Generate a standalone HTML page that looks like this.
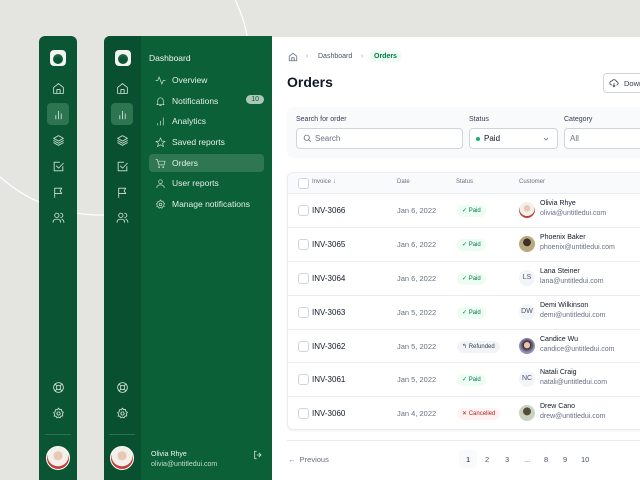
<!DOCTYPE html>
<html><head><meta charset="utf-8"><style>
*{box-sizing:border-box;margin:0;padding:0}
html,body{width:640px;height:480px;overflow:hidden}
body{background:#e4e5e0;font-family:"Liberation Sans",sans-serif;position:relative}
.abs{position:absolute}
.mini{left:39px;top:36px;width:38px;height:444px;background:#0a5533;border-radius:6px 6px 0 0}
.panel{left:104px;top:36px;width:168px;height:444px;background:#0b6038;border-radius:6px 0 0 0;overflow:hidden}
.rail{left:0;top:0;width:37px;height:100%;background:#095030}
.ic{position:absolute;width:22px;height:22px;display:flex;align-items:center;justify-content:center}
.ic svg{width:13px;height:13px;stroke:#cfe3d6;fill:none;stroke-width:1.6;stroke-linecap:round;stroke-linejoin:round}
.act{background:#2c7550;border-radius:4px}
.logo{width:16px;height:16px;background:#f2f4f2;border-radius:4px;position:absolute;overflow:hidden}
.logo:after{content:"";position:absolute;left:3px;top:4px;width:10px;height:10px;border-radius:50%;background:radial-gradient(circle at 50% 70%,#0a5533 40%,#3d7a5a)}
.nav{position:absolute;left:45px;font-size:8.5px;color:#e4efe8;display:flex;align-items:center;width:115px;height:18px;padding-left:6px}
.nav svg{width:11px;height:11px;stroke:#cfe3d6;fill:none;stroke-width:1.5;margin-right:6px;stroke-linecap:round;stroke-linejoin:round}
.av{border-radius:50%;background:radial-gradient(circle at 50% 40%,#e9c9b5 25%,#f3efe9 27%,#f3efe9 60%,#c43d3d 62%);border:1.5px solid #fff}
.main{left:272px;top:37px;width:368px;height:443px;background:#fff}
.t{position:absolute;white-space:nowrap}
.row{position:absolute;left:287px;width:360px;height:34px;border-top:1px solid #eaecf0}
.cb{position:absolute;left:11px;top:11px;width:11px;height:11px;border:1px solid #d0d5dd;border-radius:3px;background:#fff}
.row .inv{left:25px;top:12px;font-size:8px;color:#101828}
.row .dt{left:110px;top:12px;font-size:7.5px;color:#667085}
.badge{position:absolute;left:170px;top:11px;height:12px;border-radius:6px;font-size:6px;padding:0 5px;line-height:12px}
.paid{background:#ecfdf3;color:#067647}
.ref{background:#f2f4f7;color:#344054}
.can{background:#fef3f2;color:#b42318}
.cav{position:absolute;left:232px;top:8px;width:16px;height:16px;border-radius:50%;font-size:7px;color:#475467;text-align:center;line-height:16px;background:#f2f4f7}
.nm{left:253px;top:6px;font-size:7px;color:#101828}
.em{left:253px;top:16px;font-size:7px;color:#667085}
</style></head><body>
<svg class="abs" style="left:0;top:0" width="640" height="480"><circle cx="100" cy="65" r="150" fill="none" stroke="#fff" stroke-width="1.2"/></svg>

<div class="abs mini">
 <div class="logo" style="left:11px;top:14px"></div>
 <div class="ic" style="left:8px;top:41px"><svg viewBox="0 0 24 24"><path d="M3 10l9-7 9 7v11H3z"/><path d="M9 21v-7h6v7"/></svg></div>
 <div class="ic act" style="left:8px;top:67px"><svg viewBox="0 0 24 24"><path d="M7 20v-6M12 20V6M17 20v-9"/></svg></div>
 <div class="ic" style="left:8px;top:93px"><svg viewBox="0 0 24 24"><path d="M12 3l9 5-9 5-9-5z M3 12l9 5 9-5 M3 16l9 5 9-5"/></svg></div>
 <div class="ic" style="left:8px;top:119px"><svg viewBox="0 0 24 24"><path d="M20 12v8H4V4h10"/><path d="M8 11l4 4 9-9"/></svg></div>
 <div class="ic" style="left:8px;top:145px"><svg viewBox="0 0 24 24"><path d="M5 21V4h13l-3 5 3 5H5"/></svg></div>
 <div class="ic" style="left:8px;top:170px"><svg viewBox="0 0 24 24"><circle cx="9" cy="8" r="4"/><path d="M2 21c0-4 3-6 7-6s7 2 7 6M16 4a4 4 0 010 8M22 21c0-3-2-5-4-6"/></svg></div>
 <div class="ic" style="left:8px;top:340px"><svg viewBox="0 0 24 24"><circle cx="12" cy="12" r="9"/><circle cx="12" cy="12" r="4"/><path d="M5.6 5.6l3.6 3.6M14.8 14.8l3.6 3.6M18.4 5.6l-3.6 3.6M9.2 14.8l-3.6 3.6"/></svg></div>
 <div class="ic" style="left:8px;top:366px"><svg viewBox="0 0 24 24"><circle cx="12" cy="12" r="3"/><path d="M12 2l2 3 3.5-.5.5 3.5 3 2-2 3 1 3.5-3.5.5-1.5 3-3-1.5-3 1.5-1.5-3L4 17l1-3.5-2-3 3-2L6.5 5 10 5z"/></svg></div>
 <div class="abs" style="left:6px;top:398px;width:26px;height:1px;background:#2d7250"></div>
 <div class="abs av" style="left:7px;top:410px;width:24px;height:24px"></div>
</div>

<div class="abs panel">
 <div class="abs rail">
  <div class="logo" style="left:11px;top:14px"></div>
  <div class="ic" style="left:7px;top:41px"><svg viewBox="0 0 24 24"><path d="M3 10l9-7 9 7v11H3z"/><path d="M9 21v-7h6v7"/></svg></div>
  <div class="ic act" style="left:7px;top:67px"><svg viewBox="0 0 24 24"><path d="M7 20v-6M12 20V6M17 20v-9"/></svg></div>
  <div class="ic" style="left:7px;top:93px"><svg viewBox="0 0 24 24"><path d="M12 3l9 5-9 5-9-5z M3 12l9 5 9-5 M3 16l9 5 9-5"/></svg></div>
  <div class="ic" style="left:7px;top:119px"><svg viewBox="0 0 24 24"><path d="M20 12v8H4V4h10"/><path d="M8 11l4 4 9-9"/></svg></div>
  <div class="ic" style="left:7px;top:145px"><svg viewBox="0 0 24 24"><path d="M5 21V4h13l-3 5 3 5H5"/></svg></div>
  <div class="ic" style="left:7px;top:170px"><svg viewBox="0 0 24 24"><circle cx="9" cy="8" r="4"/><path d="M2 21c0-4 3-6 7-6s7 2 7 6M16 4a4 4 0 010 8M22 21c0-3-2-5-4-6"/></svg></div>
  <div class="ic" style="left:7px;top:340px"><svg viewBox="0 0 24 24"><circle cx="12" cy="12" r="9"/><circle cx="12" cy="12" r="4"/><path d="M5.6 5.6l3.6 3.6M14.8 14.8l3.6 3.6M18.4 5.6l-3.6 3.6M9.2 14.8l-3.6 3.6"/></svg></div>
  <div class="ic" style="left:7px;top:366px"><svg viewBox="0 0 24 24"><circle cx="12" cy="12" r="3"/><path d="M12 2l2 3 3.5-.5.5 3.5 3 2-2 3 1 3.5-3.5.5-1.5 3-3-1.5-3 1.5-1.5-3L4 17l1-3.5-2-3 3-2L6.5 5 10 5z"/></svg></div>
  <div class="abs" style="left:5px;top:398px;width:26px;height:1px;background:#2d7250"></div>
  <div class="abs av" style="left:6px;top:410px;width:24px;height:24px"></div>
 </div>
 <div class="t" style="left:45px;top:17px;font-size:8.5px;color:#f0f5f2">Dashboard</div>
 <div class="nav" style="top:35px"><svg viewBox="0 0 24 24"><path d="M2 12h4l3-8 6 16 3-8h4"/></svg>Overview</div>
 <div class="nav" style="top:56px"><svg viewBox="0 0 24 24"><path d="M6 17V10a6 6 0 0112 0v7l2 2H4z M10 21h4"/></svg>Notifications<span style="position:absolute;right:0;top:3px;background:#aac9b6;color:#0b5a35;border-radius:6px;font-size:7px;padding:1px 5px">10</span></div>
 <div class="nav" style="top:76px"><svg viewBox="0 0 24 24"><path d="M6 20v-4M12 20v-9M18 20V4"/></svg>Analytics</div>
 <div class="nav" style="top:97px"><svg viewBox="0 0 24 24"><path d="M12 2l3 7 7 .5-5.5 4.5 2 7L12 17l-6.5 4 2-7L2 9.5 9 9z"/></svg>Saved reports</div>
 <div class="nav" style="top:118px;background:#2f7753;border-radius:4px"><svg viewBox="0 0 24 24"><path d="M2 3h3l3 12h12l2-8H6"/><circle cx="9" cy="20" r="1.3"/><circle cx="18" cy="20" r="1.3"/></svg>Orders</div>
 <div class="nav" style="top:138px"><svg viewBox="0 0 24 24"><circle cx="12" cy="8" r="4"/><path d="M4 21c0-4 4-6 8-6s8 2 8 6"/></svg>User reports</div>
 <div class="nav" style="top:159px"><svg viewBox="0 0 24 24"><circle cx="12" cy="12" r="3"/><path d="M12 2l2 3 3.5-.5.5 3.5 3 2-2 3 1 3.5-3.5.5-1.5 3-3-1.5-3 1.5-1.5-3L4 17l1-3.5-2-3 3-2L6.5 5 10 5z"/></svg>Manage notifications</div>
 <div class="t" style="left:47px;top:415px;font-size:7px;color:#f0f5f2">Olivia Rhye</div>
 <div class="t" style="left:47px;top:425px;font-size:7px;color:#c4dccd">olivia@untitledui.com</div>
 <svg class="abs" style="left:149px;top:414px" width="10" height="10" viewBox="0 0 24 24" fill="none" stroke="#cfe3d6" stroke-width="2"><path d="M9 3H4v18h5M14 7l5 5-5 5M19 12H9"/></svg>
</div>

<div class="abs main"></div>
<svg class="abs" style="left:288px;top:52px" width="10" height="10" viewBox="0 0 24 24" fill="none" stroke="#667085" stroke-width="2"><path d="M3 10l9-7 9 7v11H3z"/><path d="M9 21v-7h6v7"/></svg>
<div class="t" style="left:306px;top:53px;font-size:7px;color:#98a2b3">›</div>
<div class="t" style="left:318px;top:53px;font-size:7px;color:#475467">Dashboard</div>
<div class="t" style="left:361px;top:53px;font-size:7px;color:#98a2b3">›</div>
<div class="t" style="left:370px;top:51px;font-size:7px;color:#067647;background:#ecfdf3;padding:2px 4px;border-radius:3px;font-weight:bold">Orders</div>
<div class="t" style="left:287px;top:74px;font-size:14px;color:#101828;font-weight:bold">Orders</div>
<div class="t" style="left:603px;top:73px;width:50px;height:20px;border:1px solid #d0d5dd;border-radius:4px;font-size:7.5px;color:#344054;padding:5px 0 0 20px">Download</div>
<svg class="abs" style="left:609px;top:78px" width="10" height="10" viewBox="0 0 24 24" fill="none" stroke="#344054" stroke-width="2"><path d="M7 17a5 5 0 110-10 6 6 0 0111 2 4 4 0 010 8M12 12v9M9 18l3 3 3-3"/></svg>

<div class="abs" style="left:287px;top:107px;width:360px;height:51px;background:#f9fafb;border-radius:6px"></div>
<div class="t" style="left:296px;top:116px;font-size:7px;color:#344054">Search for order</div>
<div class="abs" style="left:296px;top:128px;width:167px;height:21px;background:#fff;border:1px solid #d0d5dd;border-radius:4px"></div>
<svg class="abs" style="left:303px;top:134px" width="9" height="9" viewBox="0 0 24 24" fill="none" stroke="#667085" stroke-width="2.2"><circle cx="10" cy="10" r="7"/><path d="M15 15l6 6"/></svg>
<div class="t" style="left:315px;top:134px;font-size:8px;color:#667085">Search</div>
<div class="t" style="left:469px;top:116px;font-size:7px;color:#344054">Status</div>
<div class="abs" style="left:469px;top:128px;width:89px;height:21px;background:#fff;border:1px solid #d0d5dd;border-radius:4px"></div>
<div class="abs" style="left:476px;top:137px;width:4px;height:4px;border-radius:50%;background:#17b26a"></div>
<div class="t" style="left:484px;top:134px;font-size:8px;color:#101828">Paid</div>
<svg class="abs" style="left:542px;top:135px" width="8" height="8" viewBox="0 0 24 24" fill="none" stroke="#667085" stroke-width="2.5"><path d="M6 9l6 6 6-6"/></svg>
<div class="t" style="left:564px;top:116px;font-size:7px;color:#344054">Category</div>
<div class="abs" style="left:564px;top:128px;width:90px;height:21px;background:#fff;border:1px solid #d0d5dd;border-radius:4px"></div>
<div class="t" style="left:570px;top:134px;font-size:8px;color:#667085">All</div>

<div class="abs" style="left:287px;top:172px;width:360px;height:258px;border:1px solid #eaecf0;border-radius:6px;box-shadow:0 1px 2px rgba(16,24,40,.06)"></div>
<div class="abs" style="left:288px;top:173px;width:352px;height:21px;background:#f9fafb;border-radius:6px 0 0 0"></div>
<div class="abs cb" style="left:298px;top:178px"></div>
<div class="t" style="left:312px;top:179px;font-size:6px;color:#667085">Invoice ↓</div>
<div class="t" style="left:397px;top:179px;font-size:6px;color:#667085">Date</div>
<div class="t" style="left:456px;top:179px;font-size:6px;color:#667085">Status</div>
<div class="t" style="left:519px;top:179px;font-size:6px;color:#667085">Customer</div>

<div class="row" style="top:193px"><div class="cb"></div><div class="t inv">INV-3066</div><div class="t dt">Jan 6, 2022</div><div class="badge paid">✓ Paid</div><div class="cav" style="background:radial-gradient(circle at 50% 40%,#e9c9b5 25%,#f3efe9 27%,#f3efe9 60%,#c43d3d 62%)"></div><div class="t nm">Olivia Rhye</div><div class="t em">olivia@untitledui.com</div></div>
<div class="row" style="top:227px"><div class="cb"></div><div class="t inv">INV-3065</div><div class="t dt">Jan 6, 2022</div><div class="badge paid">✓ Paid</div><div class="cav" style="background:radial-gradient(circle at 50% 40%,#3a3026 30%,#b9a77e 32%)"></div><div class="t nm">Phoenix Baker</div><div class="t em">phoenix@untitledui.com</div></div>
<div class="row" style="top:261px"><div class="cb"></div><div class="t inv">INV-3064</div><div class="t dt">Jan 6, 2022</div><div class="badge paid">✓ Paid</div><div class="cav">LS</div><div class="t nm">Lana Steiner</div><div class="t em">lana@untitledui.com</div></div>
<div class="row" style="top:295px"><div class="cb"></div><div class="t inv">INV-3063</div><div class="t dt">Jan 5, 2022</div><div class="badge paid">✓ Paid</div><div class="cav">DW</div><div class="t nm">Demi Wilkinson</div><div class="t em">demi@untitledui.com</div></div>
<div class="row" style="top:329px"><div class="cb"></div><div class="t inv">INV-3062</div><div class="t dt">Jan 5, 2022</div><div class="badge ref">↰ Refunded</div><div class="cav" style="background:radial-gradient(circle at 50% 45%,#e6c4b0 25%,#3b2a2a 28%,#8f8fb8 60%)"></div><div class="t nm">Candice Wu</div><div class="t em">candice@untitledui.com</div></div>
<div class="row" style="top:362px"><div class="cb"></div><div class="t inv">INV-3061</div><div class="t dt">Jan 5, 2022</div><div class="badge paid">✓ Paid</div><div class="cav">NC</div><div class="t nm">Natali Craig</div><div class="t em">natali@untitledui.com</div></div>
<div class="row" style="top:396px"><div class="cb"></div><div class="t inv">INV-3060</div><div class="t dt">Jan 4, 2022</div><div class="badge can">✕ Cancelled</div><div class="cav" style="background:radial-gradient(circle at 50% 40%,#5a4a3a 30%,#c7d3c0 33%)"></div><div class="t nm">Drew Cano</div><div class="t em">drew@untitledui.com</div></div>

<div class="abs" style="left:287px;top:440px;width:360px;height:1px;background:#eaecf0"></div>
<div class="t" style="left:288px;top:455px;font-size:7.5px;color:#667085">← &nbsp;Previous</div>
<div class="abs" style="left:459px;top:450px;width:18px;height:18px;background:#f9fafb;border-radius:4px"></div>
<div class="t" style="left:466px;top:455px;font-size:7.5px;color:#182230">1</div>
<div class="t" style="left:485px;top:455px;font-size:7.5px;color:#475467">2</div>
<div class="t" style="left:505px;top:455px;font-size:7.5px;color:#475467">3</div>
<div class="t" style="left:524px;top:455px;font-size:7.5px;color:#475467">...</div>
<div class="t" style="left:544px;top:455px;font-size:7.5px;color:#475467">8</div>
<div class="t" style="left:563px;top:455px;font-size:7.5px;color:#475467">9</div>
<div class="t" style="left:581px;top:455px;font-size:7.5px;color:#475467">10</div>
</body></html>
